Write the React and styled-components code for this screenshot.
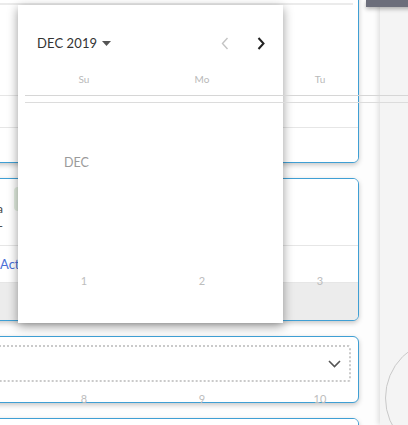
import React from "react";
import styled, { createGlobalStyle } from "styled-components";

const GlobalStyle = createGlobalStyle`
  html, body { margin: 0; padding: 0; background: #fff; }
  body { font-family: Lato, "Open Sans", Arial, sans-serif; }
  * { box-sizing: border-box; }
`;

const Page = styled.div`
  position: relative;
  width: 408px;
  height: 425px;
  overflow: hidden;
  display: flex;
  background: #fdfdfd;
`;

const Main = styled.div`
  flex: 0 0 371px;
  margin-left: -12px;
  margin-top: -20px;
  display: flex;
  flex-direction: column;
  gap: 15px;
`;

const Card = styled.div`
  flex-shrink: 0;
  background: #fff;
  border: 1px solid #3f9fd4;
  border-radius: 6px;
  box-shadow: 0 2px 5px rgba(0, 0, 0, 0.22);
  overflow: hidden;
  display: flex;
  flex-direction: column;
`;

const CardHeader = styled.div`
  height: 24px;
  margin-right: 5px;
  border-bottom: 2px solid #ebebeb;
`;

const Section = styled.div`
  height: ${(p) => p.$h}px;
  display: flex;
  align-items: ${(p) => p.$align || "center"};
  background: ${(p) => (p.$muted ? "#ececec" : "#fff")};
  border-bottom: ${(p) => (p.$last ? "none" : "1px solid #e6e6e6")};
  padding: ${(p) => p.$pad || "0"};
`;

const Fragment = styled.div`
  width: 14px;
  display: flex;
  flex-direction: column;
  align-items: flex-end;
  gap: 7px;
  margin-top: 25px;
  font-size: 12px;
  color: #444;
  line-height: 10px;
`;

const GreenButton = styled.div`
  margin-left: 11px;
  margin-top: 8px;
  width: 110px;
  height: 24px;
  border-radius: 4px;
  background: #e4efe2;
`;

const Link = styled.span`
  padding-left: 11px;
  font-size: 13px;
  color: #4a6fd7;
`;

const SelectBox = styled.div`
  height: 37px;
  border: 2px dotted #cacaca;
  border-radius: 3px;
  display: flex;
  align-items: center;
  justify-content: flex-end;
  padding-right: 8px;
  color: #555;
`;

const SelectCardBody = styled.div`
  padding: 8px 7px 20px 7px;
`;

const Side = styled.div`
  flex: 1;
  margin-left: 21px;
  background: #f4f4f4;
  box-shadow: -2px 0 5px rgba(0, 0, 0, 0.12);
  display: flex;
  flex-direction: column;
`;

const Ring = styled.div`
  flex-shrink: 0;
  margin-top: 339px;
  margin-left: 5px;
  width: 118px;
  height: 118px;
  border: 1px solid #c9c9c9;
  border-radius: 50%;
`;

const TopBar = styled.div`
  position: absolute;
  left: 366px;
  top: 0;
  width: 50px;
  height: 7px;
  background: #6c6e7b;
  box-shadow: 0 2px 4px rgba(0, 0, 0, 0.3);
`;

const Popover = styled.div`
  position: absolute;
  left: 18px;
  top: 5px;
  width: 265px;
  height: 318px;
  background: #fff;
  box-shadow: 0 3px 10px rgba(0, 0, 0, 0.4);
  padding-top: 28px;
  z-index: 5;
`;

const PickerHeader = styled.div`
  height: 20px;
  display: flex;
  align-items: center;
  padding: 0 18px 0 19px;
`;

const Title = styled.div`
  font-size: 13px;
  color: #333;
  display: flex;
  align-items: center;
  gap: 5px;
  letter-spacing: 0.1px;
`;

const Nav = styled.div`
  margin-left: auto;
  display: flex;
  align-items: center;
  gap: 28px;
`;

const Grid = styled.div`
  margin-left: 7px;
  width: 826px;
`;

const WeekdayRow = styled.div`
  height: 43px;
  display: grid;
  grid-template-columns: repeat(7, 118px);
  align-items: end;
  padding-bottom: 10px;
  border-bottom: 1px solid #d6d6d6;
`;

const Weekday = styled.div`
  font-size: 10px;
  line-height: 12px;
  color: #b9b9b9;
  text-align: center;
`;

const Weeks = styled.div`
  margin-top: 6px;
  border-top: 1px solid #dcdcdc;
`;

const MonthRow = styled.div`
  height: 118px;
  display: flex;
  align-items: center;
  padding-left: 39px;
  font-size: 12.5px;
  color: #9a9a9a;
`;

const WeekRow = styled.div`
  height: 118px;
  display: grid;
  grid-template-columns: repeat(7, 118px);
  align-items: center;
`;

const Day = styled.div`
  font-size: 11px;
  color: #bdbdbd;
  text-align: center;
`;

const Caret = () => (
  <svg width="9" height="5" viewBox="0 0 9 5">
    <path d="M0 0 L9 0 L4.5 5 Z" fill="#555" />
  </svg>
);

const Chevron = ({ dir, color, weight }) => (
  <svg width="8" height="13" viewBox="0 0 8 13">
    <path
      d={dir === "left" ? "M6.5 1 L1.5 6.5 L6.5 12" : "M1.5 1 L6.5 6.5 L1.5 12"}
      fill="none"
      stroke={color}
      strokeWidth={weight}
    />
  </svg>
);

const ChevronDown = () => (
  <svg width="13" height="8" viewBox="0 0 13 8">
    <path d="M1 1 L6.5 6.5 L12 1" fill="none" stroke="#555" strokeWidth="1.6" />
  </svg>
);

const weekdays = ["Su", "Mo", "Tu", "We", "Th", "Fr", "Sa"];
const weeks = [
  ["1", "2", "3", "4", "5", "6", "7"],
  ["8", "9", "10", "11", "12", "13", "14"],
];

export default function App() {
  return (
    <>
      <GlobalStyle />
      <Page>
        <Main>
          <Card>
            <CardHeader />
            <Section $h={91} />
            <Section $h={32} />
            <Section $h={34} $last />
          </Card>
          <Card>
            <Section $h={67} $align="flex-start">
              <Fragment>
                <span>a</span>
                <span>-</span>
              </Fragment>
              <GreenButton />
            </Section>
            <Section $h={37}>
              <Link>Actions</Link>
            </Section>
            <Section $h={37} $muted $last />
          </Card>
          <Card>
            <SelectCardBody>
              <SelectBox>
                <ChevronDown />
              </SelectBox>
            </SelectCardBody>
          </Card>
          <Card>
            <Section $h={60} $last />
          </Card>
        </Main>
        <Side>
          <Ring />
        </Side>
        <TopBar />
        <Popover>
          <PickerHeader>
            <Title>
              DEC 2019 <Caret />
            </Title>
            <Nav>
              <Chevron dir="left" color="#c4c4c4" weight={1.4} />
              <Chevron dir="right" color="#222" weight={2} />
            </Nav>
          </PickerHeader>
          <Grid>
            <WeekdayRow>
              {weekdays.map((d) => (
                <Weekday key={d}>{d}</Weekday>
              ))}
            </WeekdayRow>
            <Weeks>
              <MonthRow>DEC</MonthRow>
              {weeks.map((w, i) => (
                <WeekRow key={i}>
                  {w.map((d) => (
                    <Day key={d}>{d}</Day>
                  ))}
                </WeekRow>
              ))}
            </Weeks>
          </Grid>
        </Popover>
      </Page>
    </>
  );
}
